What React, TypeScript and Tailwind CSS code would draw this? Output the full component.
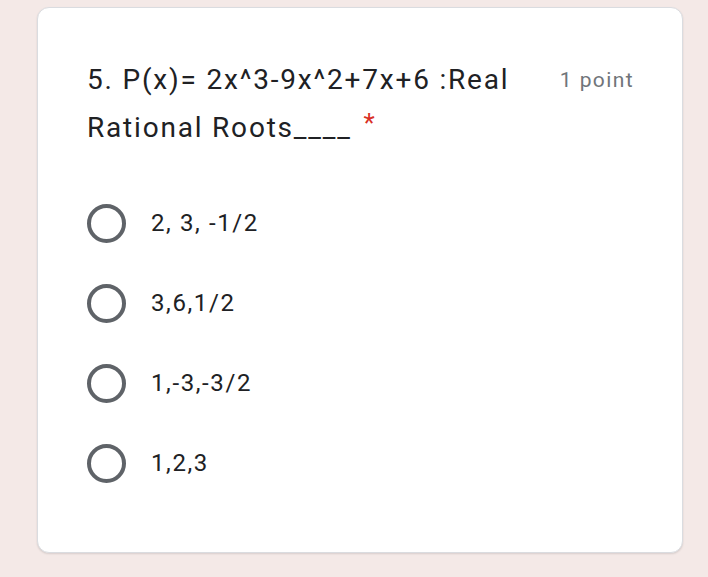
export default function App() {
    const options = ['2, 3, -1/2', '3,6,1/2', '1,-3,-3/2', '1,2,3'];

    return (
        <div className="h-[577px] w-[708px] bg-[#f4e9e7] pl-[37px] pr-[25px] pt-[7px]" style={{ fontFamily: 'Roboto, "Liberation Sans", sans-serif' }}>
            <div className="h-[546px] rounded-[12px] border border-[#dadce0] bg-white pl-[49px] pr-[48px] pt-[48px] shadow-[0_1px_2px_rgba(0,0,0,0.12)]">
                <div className="flex items-start justify-between">
                    <div className="w-[450px] text-[28px] leading-[48px] tracking-[1.8px] text-[#202124]">
                        5. P(x)= 2x^3-9x^2+7x+6 :Real Rational Roots____
                        <span className="relative top-[-5px] ml-[12px] inline-block text-[26px] leading-none text-[#d93025]">*</span>
                    </div>
                    <div className="pt-[9px] text-[21px] leading-[30px] tracking-[1.4px] text-[#70757a]">1 point</div>
                </div>

                <div className="mt-[51px] flex flex-col gap-[40px]">
                    {options.map((opt) => (
                        <div key={opt} className="flex h-[40px] items-center">
                            <div className="h-[39px] w-[39px] rounded-full border-[4px] border-[#5f6368]" />
                            <span className="ml-[25px] text-[24px] tracking-[1.6px] text-[#202124]">{opt}</span>
                        </div>
                    ))}
                </div>
            </div>
        </div>
    );
}
